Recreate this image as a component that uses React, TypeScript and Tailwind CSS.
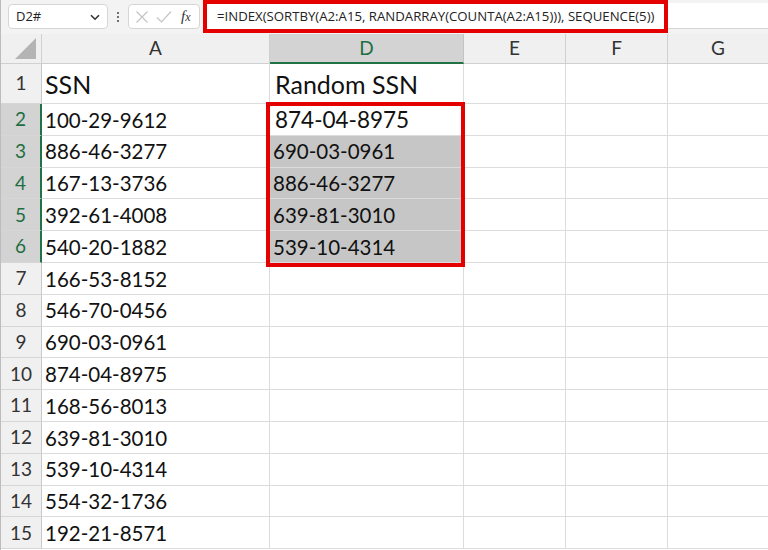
import React from "react";

const colA = [
  "SSN",
  "100-29-9612",
  "886-46-3277",
  "167-13-3736",
  "392-61-4008",
  "540-20-1882",
  "166-53-8152",
  "546-70-0456",
  "690-03-0961",
  "874-04-8975",
  "168-56-8013",
  "639-81-3010",
  "539-10-4314",
  "554-32-1736",
  "192-21-8571",
];
const colD = ["Random SSN", "874-04-8975", "690-03-0961", "886-46-3277", "639-81-3010", "539-10-4314"];

const cellFont = { fontFamily: "Lato, 'Open Sans', sans-serif" };

export default function App() {
  return (
    <div className="w-[768px] h-[550px] overflow-hidden bg-white relative border-l border-[#bdbdbd]" style={{ fontFamily: "Lato, sans-serif" }}>
      {/* Top bar */}
      <div className="h-[34px] bg-[#f3f3f3] flex items-start relative">
        <div className="mt-[4px] ml-[7px] w-[100px] h-[25px] bg-white border border-[#d6d6d6] rounded-[4px] flex items-center justify-between px-[7px]">
          <span className="text-[13px] text-[#222]" style={{ fontFamily: "'Open Sans', sans-serif" }}>D2#</span>
          <svg width="10" height="7" viewBox="0 0 10 7" className="mt-[2px]"><path d="M1 1.2 L5 5.2 L9 1.2" fill="none" stroke="#333" strokeWidth="1.6" /></svg>
        </div>
        <div className="mt-[4px] w-[20px] h-[25px] flex flex-col items-center justify-center gap-[2px]">
          <span className="w-[2px] h-[2px] bg-[#444] rounded-full"></span>
          <span className="w-[2px] h-[2px] bg-[#444] rounded-full"></span>
          <span className="w-[2px] h-[2px] bg-[#444] rounded-full"></span>
        </div>
        <div className="mt-[4px] w-[72px] h-[25px] bg-white border border-[#d6d6d6] rounded-[4px] flex items-center pl-[6px]">
          <svg width="14" height="14" viewBox="0 0 14 14"><path d="M1.5 1.5 L12.5 12.5 M12.5 1.5 L1.5 12.5" stroke="#c4c4c4" strokeWidth="1.2" fill="none" /></svg>
          <svg width="16" height="14" viewBox="0 0 16 14" className="ml-[7px]"><path d="M1 7.5 L5.5 12 L15 1.5" stroke="#c4c4c4" strokeWidth="1.2" fill="none" /></svg>
          <span className="ml-[9px] text-[15px] italic text-[#333]" style={{ fontFamily: "'Liberation Serif', serif" }}>f<span className="text-[12px]">x</span></span>
        </div>
        <div className="mt-[3px] ml-[3px] flex-1 h-[26px] bg-white border-b border-[#d6d6d6]"></div>
        {/* formula red box overlay */}
        <div className="absolute left-[202px] top-0 w-[465px] h-[33px] border-[4px] border-[#e50000] bg-white flex items-center pl-[10px]">
          <span className="text-[13.2px] text-[#222] whitespace-nowrap" style={{ fontFamily: "'Open Sans', sans-serif" }}>
            =INDEX(SORTBY(A2:A15, RANDARRAY(COUNTA(A2:A15))), SEQUENCE(5))
          </span>
        </div>
      </div>

      {/* Grid */}
      <div className="relative grid grid-cols-[41px_228px_194px_102px_102px_101px]">
        {/* Header row */}
        <div className="h-[30px] bg-[#f0f0f0] border-r border-b border-[#d0d0d0] relative">
          <svg width="22" height="22" viewBox="0 0 22 22" className="absolute right-[4px] bottom-[3px]"><path d="M21 0 L21 21 L0 21 Z" fill="#b4b4b4" /></svg>
        </div>
        {["A", "D", "E", "F", "G"].map((c) => (
          <div
            key={c}
            className={
              c === "D"
                ? "h-[30px] bg-[#d3d3d3] border-r border-[#c4c4c4] border-b-2 border-b-[#217346] flex items-center justify-center text-[19px] text-[#1e6e42]"
                : "h-[30px] bg-[#f0f0f0] border-r border-b border-[#d0d0d0] flex items-center justify-center text-[19px] text-[#333]"
            }
            style={cellFont}
          >
            {c}
          </div>
        ))}

        {colA.map((a, i) => {
          const sel = i >= 1 && i <= 5;
          const h = i === 0 ? "h-[40px]" : "h-[31.8px]";
          const d = colD[i];
          return (
            <React.Fragment key={i}>
              <div
                className={
                  (sel
                    ? "bg-[#d3d3d3] text-[#1e6e42] border-r-2 border-r-[#217346] "
                    : "bg-[#f0f0f0] text-[#333] border-r border-r-[#c8c8c8] ") +
                  h +
                  " border-b border-b-[#d6d6d6] flex items-center justify-center text-[19px]"
                }
                style={cellFont}
              >
                {i + 1}
              </div>
              <div
                className={
                  h +
                  " border-r border-b border-[#dcdcdc] flex items-center pl-[3px] text-[#111] " +
                  (i === 0 ? "text-[25px] pt-[2px]" : "text-[20.5px] pt-[1px]")
                }
                style={cellFont}
              >
                {a}
              </div>
              <div
                className={
                  h +
                  " border-r border-b border-[#dcdcdc] flex items-center text-[#111] " +
                  (i === 0
                    ? "text-[25px] pl-[5px] pt-[2px]"
                    : i === 1
                    ? "text-[22.5px] pl-[5px] pt-[1px]"
                    : i <= 5
                    ? "text-[20.5px] pl-[3px] pt-[1px] bg-[#c6c6c6]"
                    : "")
                }
                style={cellFont}
              >
                {d ?? ""}
              </div>
              <div className={h + " border-r border-b border-[#dcdcdc]"}></div>
              <div className={h + " border-r border-b border-[#dcdcdc]"}></div>
              <div className={h + " border-r border-b border-[#dcdcdc]"}></div>
            </React.Fragment>
          );
        })}

        {/* red box around D2:D6 */}
        <div className="absolute left-[265px] top-[68px] w-[199px] h-[165px] border-[4px] border-[#e50000] pointer-events-none"></div>
      </div>
    </div>
  );
}
